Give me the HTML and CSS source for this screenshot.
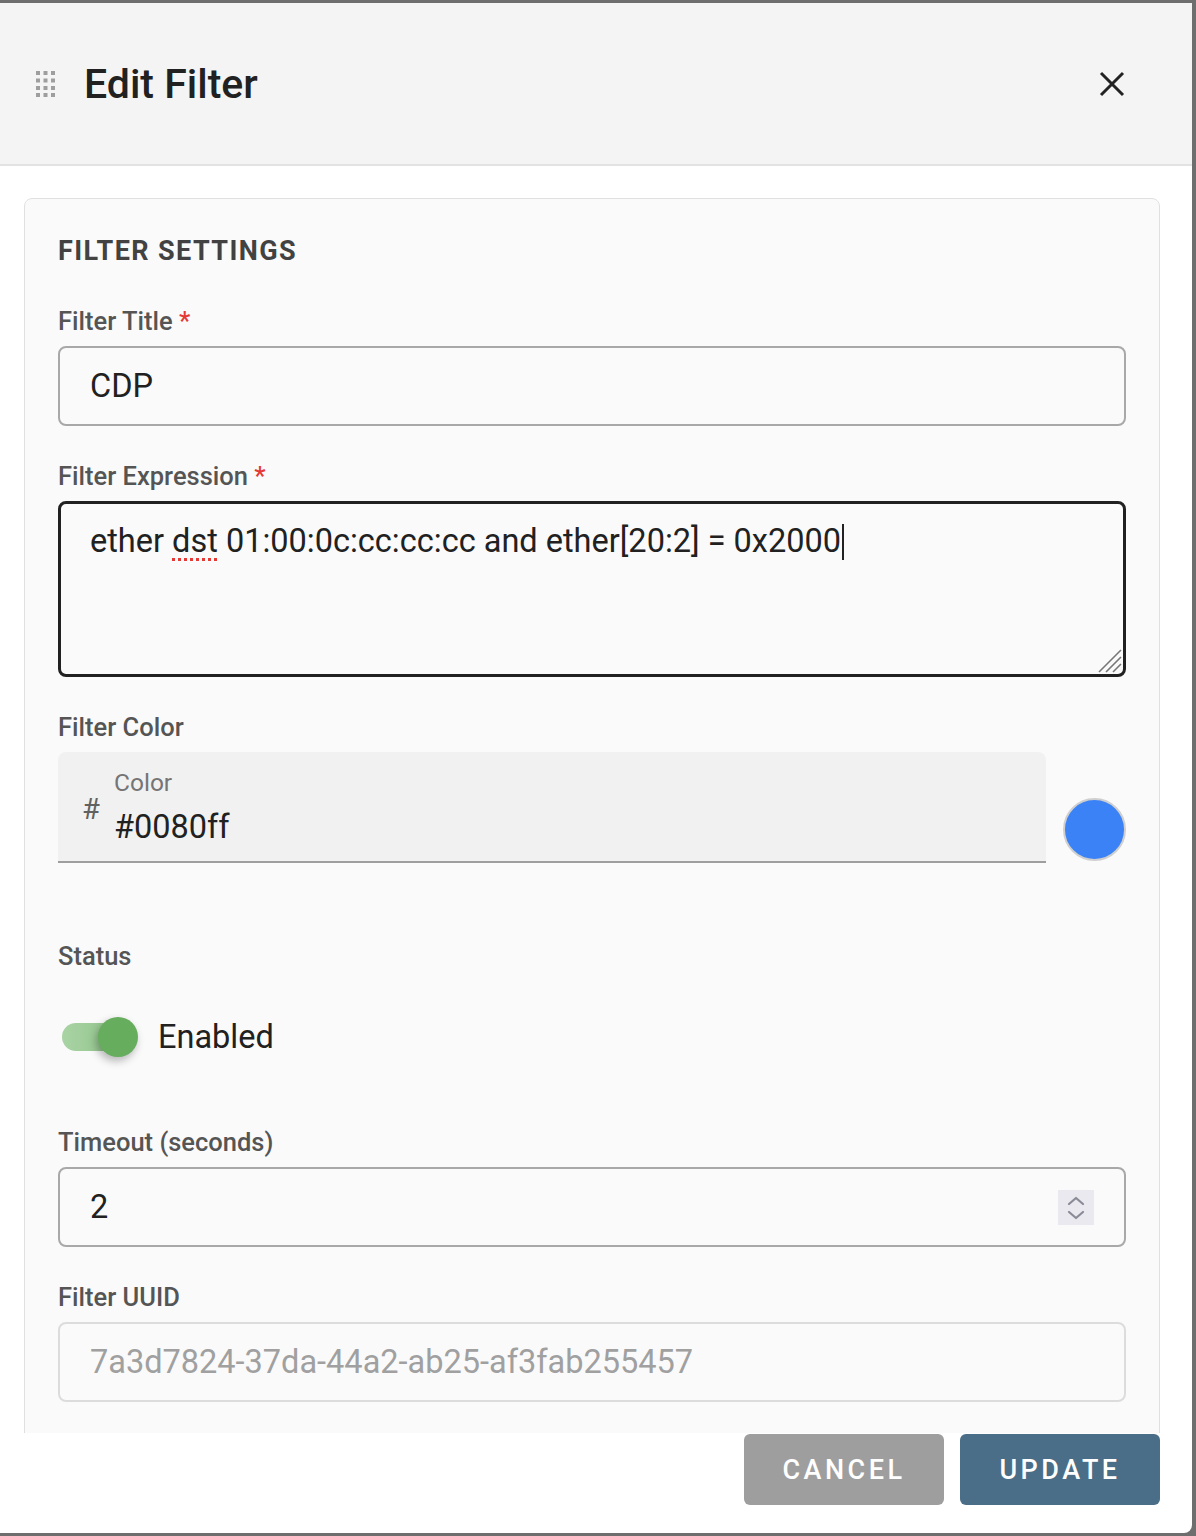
FILE: index.html
```html
<!DOCTYPE html>
<html lang="en">
<head>
    <meta charset="UTF-8">
    <meta name="viewport" content="width=device-width, initial-scale=1.0">
    <title>Edit Filter</title>
    <link rel="stylesheet" href="styles.css">
</head>
<body>
    <div class="dialog">
        <header class="dialog-head">
            <svg class="grip" width="20" height="26" viewBox="0 0 20 26">
                <rect x="0" y="0" width="4" height="4"/><rect x="7.5" y="0" width="4" height="4"/><rect x="15" y="0" width="4" height="4"/>
                <rect x="0" y="7.5" width="4" height="4"/><rect x="7.5" y="7.5" width="4" height="4"/><rect x="15" y="7.5" width="4" height="4"/>
                <rect x="0" y="15" width="4" height="4"/><rect x="7.5" y="15" width="4" height="4"/><rect x="15" y="15" width="4" height="4"/>
                <rect x="0" y="22" width="4" height="4"/><rect x="7.5" y="22" width="4" height="4"/><rect x="15" y="22" width="4" height="4"/>
            </svg>
            <h1 class="dialog-title">Edit Filter</h1>
            <button class="close" type="button" aria-label="close">
                <svg width="26" height="26" viewBox="0 0 26 26">
                    <path d="M2 2 L24 24 M24 2 L2 24" stroke="#222" stroke-width="3" fill="none"/>
                </svg>
            </button>
        </header>

        <main class="dialog-body">
            <section class="card">
                <h2 class="card-title">Filter Settings</h2>

                <div class="field">
                    <label class="label">Filter Title <span class="req">*</span></label>
                    <input class="input" type="text" value="CDP">
                </div>

                <div class="field">
                    <label class="label">Filter Expression <span class="req">*</span></label>
                    <div class="textarea" role="textbox">ether <span class="typo">dst</span> 01:00:0c:cc:cc:cc and ether[20:2] = 0x2000<span class="caret"></span>
                        <svg class="resize" width="24" height="24" viewBox="0 0 24 24">
                            <path d="M23 1 L1 23 M23 8 L8 23 M23 15 L15 23" stroke="#777" stroke-width="1.6" fill="none"/>
                        </svg>
                    </div>
                </div>

                <div class="field field-color">
                    <label class="label">Filter Color</label>
                    <div class="color-row">
                        <div class="filled">
                            <span class="adorn">#</span>
                            <div class="filled-inner">
                                <span class="filled-label">Color</span>
                                <span class="filled-value">#0080ff</span>
                            </div>
                        </div>
                        <div class="swatch"></div>
                    </div>
                </div>

                <div class="field field-status">
                    <label class="label">Status</label>
                    <div class="switch-row">
                        <div class="switch">
                            <div class="track"></div>
                            <div class="thumb"></div>
                        </div>
                        <span class="switch-text">Enabled</span>
                    </div>
                </div>

                <div class="field">
                    <label class="label">Timeout (seconds)</label>
                    <div class="input number">
                        <span class="number-value">2</span>
                        <div class="spin">
                            <svg width="36" height="35" viewBox="0 0 36 35">
                                <path d="M11 14 L18 8 L25 14 M11 22 L18 28 L25 22" stroke="#8b8b98" stroke-width="2.2" fill="none" stroke-linecap="round" stroke-linejoin="round"/>
                            </svg>
                        </div>
                    </div>
                </div>

                <div class="field">
                    <label class="label">Filter UUID</label>
                    <input class="input input-off" type="text" value="7a3d7824-37da-44a2-ab25-af3fab255457" readonly>
                </div>
            </section>
        </main>

        <footer class="dialog-foot">
            <button class="btn cancel" type="button">Cancel</button>
            <button class="btn update" type="button">Update</button>
        </footer>
    </div>
</body>
</html>
```

FILE: styles.css
```css
*{
    box-sizing: border-box;
    font-family: Roboto, "Liberation Sans", sans-serif;
}
body{
    margin: 0;
    padding: 0;
    background-color: #6e6e6e;
}
.dialog{
    width: 1192px;
    height: 1530px;
    margin-top: 3px;
    background-color: #fff;
    border-radius: 0 0 8px 0;
    display: flex;
    flex-direction: column;
    overflow: hidden;
}

/* header */
.dialog-head{
    height: 163px;
    flex: none;
    background-color: #f4f4f4;
    border-bottom: 2px solid #e2e2e2;
    display: flex;
    align-items: center;
    padding: 0 56px 0 36px;
}
.grip{
    fill: #9e9e9e;
    flex: none;
}
.dialog-title{
    margin: 0 0 0 28px;
    font-size: 41px;
    font-weight: 500;
    color: #212121;
    flex: 1;
}
.close{
    width: 48px;
    height: 48px;
    border: none;
    background: none;
    padding: 11px;
    cursor: pointer;
}

/* body */
.dialog-body{
    height: 1267px;
    flex: none;
    overflow: hidden;
    padding: 32px 32px 0 24px;
}
.card{
    background-color: #fafafa;
    border: 1px solid #e0e0e0;
    border-radius: 8px;
    padding: 36px 33px 40px 33px;
}
.card-title{
    margin: 0 0 41px;
    font-size: 27px;
    line-height: 32px;
    font-weight: bold;
    text-transform: uppercase;
    letter-spacing: 1.4px;
    color: #424242;
}
.field{
    display: flex;
    flex-direction: column;
    margin-bottom: 37px;
}
.label{
    font-size: 25.5px;
    line-height: 26px;
    font-weight: 500;
    color: #555;
    margin-bottom: 12px;
}
.req{
    color: #e53935;
}
.input{
    height: 80px;
    border: 2px solid #a8a8a8;
    border-radius: 8px;
    background-color: #fafafa;
    padding: 0 30px;
    font-size: 32.5px;
    color: #212121;
    outline: none;
    width: 100%;
}
.input-off{
    border-color: #dcdcdc;
    color: #a0a0a0;
}
.textarea{
    position: relative;
    height: 176px;
    border: 3px solid #212121;
    border-radius: 8px;
    padding: 17px 29px;
    font-size: 32.5px;
    line-height: 40px;
    color: #212121;
}
.typo{
    text-decoration: underline dotted #e53935;
    text-decoration-thickness: 2.5px;
    text-underline-offset: 6px;
}
.caret{
    display: inline-block;
    width: 2px;
    height: 36px;
    background-color: #222;
    vertical-align: -8px;
    margin-left: 1px;
}
.resize{
    position: absolute;
    right: 1px;
    bottom: 1px;
}

/* color */
.field-color{
    margin-bottom: 80px;
}
.color-row{
    display: flex;
    align-items: flex-end;
    gap: 17px;
}
.filled{
    flex: 1;
    height: 111px;
    background-color: #f1f1f1;
    border-radius: 8px 8px 0 0;
    border-bottom: 2px solid #9e9e9e;
    display: flex;
    align-items: center;
    padding-left: 24px;
}
.adorn{
    width: 32px;
    font-size: 29px;
    color: #616161;
    margin-top: 4px;
}
.filled-inner{
    display: flex;
    flex-direction: column;
    margin-top: 4px;
}
.filled-label{
    font-size: 24.5px;
    line-height: 26px;
    color: #757575;
    margin-bottom: 11px;
}
.filled-value{
    font-size: 32.5px;
    line-height: 40px;
    color: #212121;
}
.swatch{
    width: 63px;
    height: 63px;
    border-radius: 50%;
    border: 2px solid #cfcfcf;
    background-color: #3a82f6;
    margin-bottom: 2px;
    flex: none;
}

/* status */
.field-status .label{
    margin-bottom: 41px;
}
.field-status{
    margin-bottom: 65px;
}
.switch-row{
    height: 54px;
    display: flex;
    align-items: center;
}
.switch{
    position: relative;
    width: 76px;
    height: 40px;
    margin-left: 4px;
}
.track{
    width: 62px;
    height: 28px;
    margin-top: 6px;
    border-radius: 14px;
    background: linear-gradient(to right, #a9d3a4, #8fc389);
}
.thumb{
    position: absolute;
    right: 0;
    top: 0;
    width: 40px;
    height: 40px;
    border-radius: 50%;
    background-color: #66ad5d;
    box-shadow: -2px 4px 8px rgba(0,0,0,.28);
}
.switch-text{
    margin-left: 20px;
    font-size: 32.5px;
    color: #212121;
}

/* number */
.number{
    display: flex;
    align-items: center;
    justify-content: space-between;
    padding-right: 30px;
}
.spin{
    width: 36px;
    height: 35px;
    background-color: #e9e9ef;
}
.spin svg{
    display: block;
}

/* footer */
.dialog-foot{
    flex: 1;
    display: flex;
    justify-content: flex-end;
    gap: 16px;
    padding: 1px 32px 0;
}
.btn{
    width: 200px;
    height: 71px;
    border: none;
    border-radius: 6px;
    color: #fff;
    font-size: 27px;
    font-weight: 500;
    letter-spacing: 3.5px;
    text-transform: uppercase;
    cursor: pointer;
}
.cancel{
    background-color: #9e9e9e;
}
.update{
    background-color: #4a6e87;
}
```
